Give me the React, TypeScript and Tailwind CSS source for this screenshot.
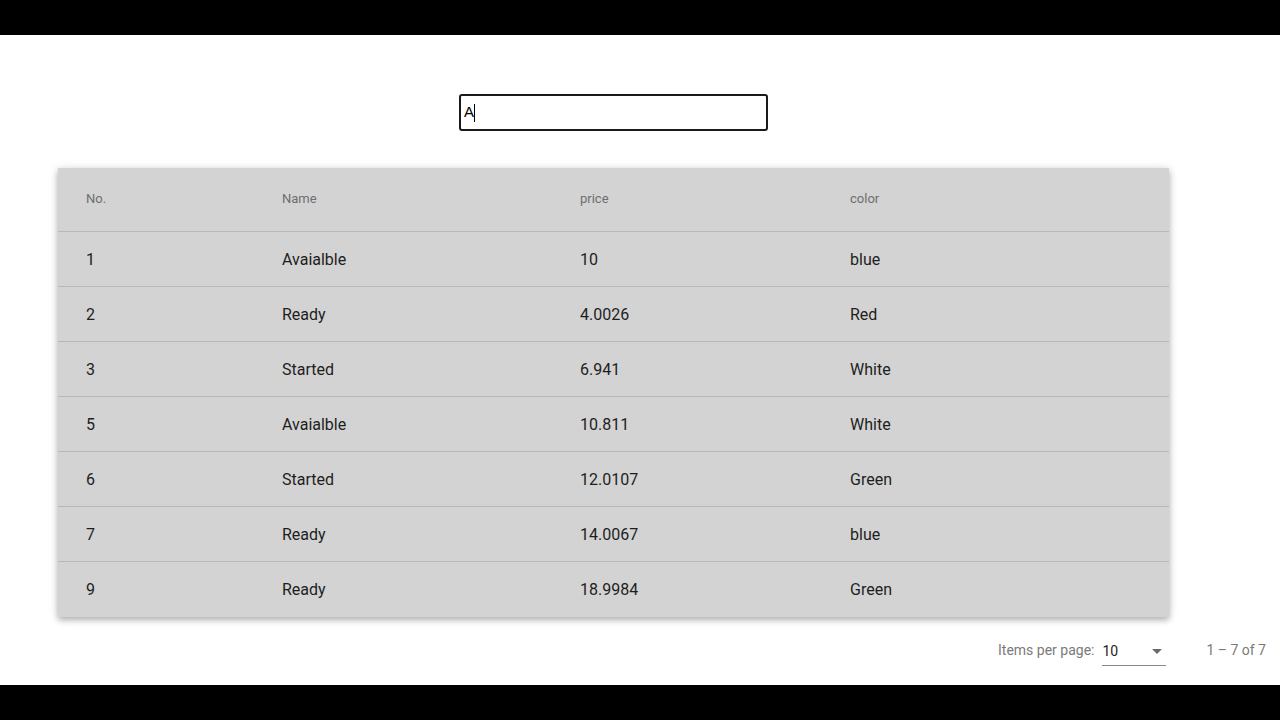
const rows = [
  { no: 1, name: 'Avaialble', price: '10', color: 'blue' },
  { no: 2, name: 'Ready', price: '4.0026', color: 'Red' },
  { no: 3, name: 'Started', price: '6.941', color: 'White' },
  { no: 5, name: 'Avaialble', price: '10.811', color: 'White' },
  { no: 6, name: 'Started', price: '12.0107', color: 'Green' },
  { no: 7, name: 'Ready', price: '14.0067', color: 'blue' },
  { no: 9, name: 'Ready', price: '18.9984', color: 'Green' },
];

const cols = 'grid grid-cols-[196px_298px_270px_1fr] pl-[28px]';

export default function App() {
  return (
    <div className="flex h-[720px] w-[1280px] flex-col bg-black font-['Roboto',sans-serif]">
      <div className="h-[35px] shrink-0" />
      <main className="flex h-[650px] flex-col bg-white">
        <div className="flex pt-[59px] pl-[459px]">
          <div className="flex h-[37px] w-[309px] items-center rounded-[3px] border-2 border-[#1a1a1a] px-[3px] font-['Liberation_Sans',sans-serif] text-[15px] text-black">
            A<span className="inline-block h-[18px] w-px bg-black" />
          </div>
        </div>

        <div className="mt-[37px] ml-[58px] w-[1111px] bg-[#d3d3d3] shadow-[0_3px_6px_rgba(0,0,0,0.25),0_1px_10px_rgba(0,0,0,0.12)]">
          <div className={`${cols} h-[64px] items-center border-b border-[#b8b8b8] pb-px text-[13px] text-[#6e6e6e]`}>
            <span>No.</span>
            <span>Name</span>
            <span>price</span>
            <span>color</span>
          </div>
          {rows.map((r, i) => (
            <div
              key={r.no}
              className={`${cols} h-[55px] items-center pt-[1px] text-[16px] text-[#1e1e1e] ${i < rows.length - 1 ? 'border-b border-[#b8b8b8]' : ''}`}
            >
              <span>{r.no}</span>
              <span>{r.name}</span>
              <span>{r.price}</span>
              <span>{r.color}</span>
            </div>
          ))}
        </div>

        <div className="flex h-[64px] items-center justify-end pt-[3px] pr-[14px] text-[14px] text-[#7a7a7a]">
          <span className="mr-[8px]">Items per page:</span>
          <div className="relative mr-[40px] flex h-[30px] w-[64px] items-center border-b border-[#8a8a8a] text-[#1e1e1e]">
            <span className="mt-[2px]">10</span>
            <span className="absolute right-[4px] top-[13px] h-0 w-0 border-x-[5px] border-t-[5px] border-x-transparent border-t-[#6a6a6a]" />
          </div>
          <span>1 – 7 of 7</span>
        </div>
      </main>
      <div className="h-[35px] shrink-0" />
    </div>
  );
}
